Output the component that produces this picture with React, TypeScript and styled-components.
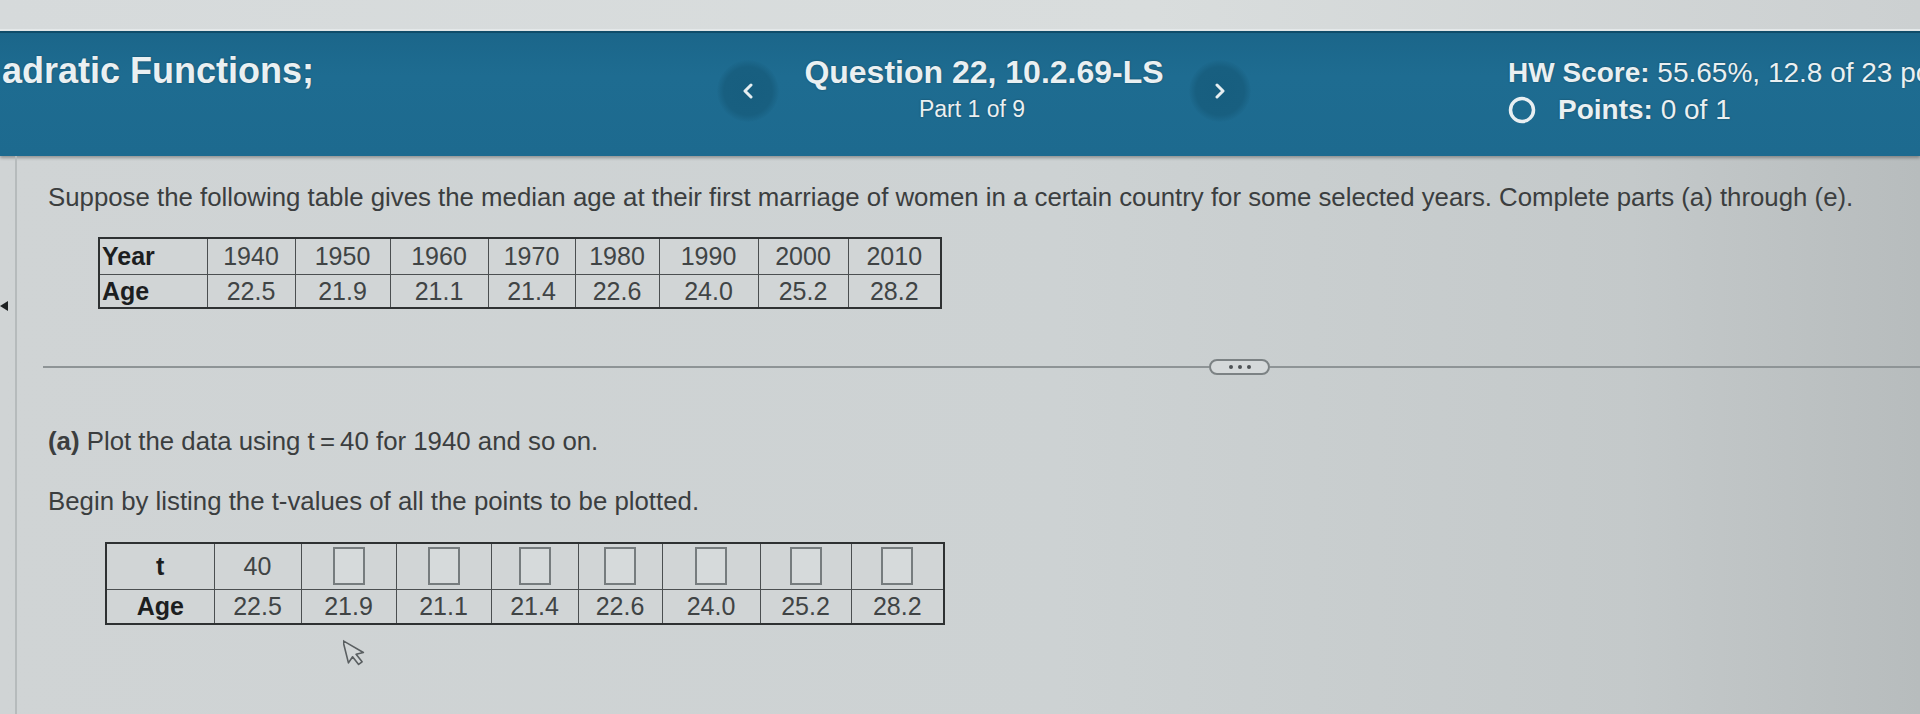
import styled, { createGlobalStyle } from "styled-components";

const GlobalStyle = createGlobalStyle`
  html, body {
    margin: 0;
    padding: 0;
  }
  body {
    background: #cdd2d3;
    font-family: "Liberation Sans", Arial, sans-serif;
  }
`;

const Page = styled.div`
  position: relative;
  width: 1920px;
  height: 714px;
  overflow: hidden;
  background: linear-gradient(90deg, #d0d4d5 0%, #cdd2d3 55%, #c4c9ca 85%, #b7bcbd 100%);
`;

const TopStrip = styled.div`
  height: 29px;
  background: linear-gradient(90deg, #d6dadb 0%, #d9dddd 60%, #ccd0d1 100%);
  border-bottom: 2px solid #e4e8e9;
`;

const Header = styled.header`
  height: 123px;
  border-top: 2px solid #0f4c69;
  background: linear-gradient(180deg, #1b668a 0%, #1e6c91 35%, #1d6a8f 100%);
  box-shadow: 0 2px 3px rgba(0, 0, 0, 0.3);
  display: flex;
  align-items: flex-start;
  color: #eaf0f2;
  text-shadow: 0 0 2px rgba(0, 0, 0, 0.35);
  white-space: nowrap;

  & > * {
    flex: none;
  }
`;

const SectionTitle = styled.div`
  width: 713px;
  padding: 18px 0 0 2px;
  font-size: 36px;
  line-height: 40px;
  font-weight: 700;
`;

const Nav = styled.div`
  display: flex;
  align-items: flex-start;
  margin-left: 2px;
`;

const NavButton = styled.div`
  width: 62px;
  height: 62px;
  margin-top: 27px;
  border-radius: 50%;
  background: radial-gradient(circle, #175e7f 0%, #185f80 55%, rgba(27, 102, 138, 0) 72%);
  display: flex;
  align-items: center;
  justify-content: center;
`;

const QuestionBlock = styled.div`
  width: 410px;
  padding-top: 21px;
  display: flex;
  flex-direction: column;
  align-items: center;
`;

const QuestionTitle = styled.div`
  font-size: 32px;
  line-height: 36px;
  font-weight: 700;
`;

const PartLabel = styled.div`
  margin-top: 5px;
  margin-right: 24px;
  font-size: 23px;
  line-height: 28px;
`;

const ScoreBlock = styled.div`
  margin-left: 257px;
  padding-top: 23px;
  font-size: 28px;
  line-height: 34px;
`;

const ScoreLine = styled.div``;

const PointsLine = styled.div`
  margin-top: 3px;
  display: flex;
  align-items: center;
  gap: 22px;
`;

const Strong = styled.b`
  font-weight: 700;
`;

const Body = styled.div`
  display: flex;
  height: 558px;
`;

const Gutter = styled.div`
  width: 15px;
  padding-top: 145px;
  border-right: 2px solid #b6bbbc;
`;

const Notch = styled.div`
  width: 0;
  height: 0;
  border-top: 5px solid transparent;
  border-bottom: 5px solid transparent;
  border-right: 8px solid #1e2122;
`;

const Main = styled.div`
  flex: 1;
  padding-left: 31px;
  color: #3b3e3f;
  font-size: 25.8px;
  line-height: 30px;
`;

const Paragraph = styled.p<{ $top: number }>`
  margin: ${(p) => p.$top}px 0 0;
  white-space: nowrap;
`;

const DataTable = styled.table<{ $top: number; $left: number }>`
  margin: ${(p) => p.$top}px 0 0 ${(p) => p.$left}px;
  border-collapse: collapse;
  table-layout: fixed;
  border: 2px solid #2e3132;
  font-size: 25px;
`;

const Col = styled.col<{ $w: number }>`
  width: ${(p) => p.$w}px;
`;

const Row = styled.tr<{ $h: number }>`
  height: ${(p) => p.$h}px;
`;

const Cell = styled.td`
  border: 1.5px solid #4b4f51;
  padding: 0;
  text-align: center;
  vertical-align: middle;
  color: #404445;
  background: #d1d5d6;
`;

const LabelCell = styled(Cell)<{ $align: "left" | "center" }>`
  text-align: ${(p) => p.$align};
  padding-left: ${(p) => (p.$align === "left" ? "2px" : "0")};
  font-weight: 700;
  color: #1c1e1f;
`;

const AnswerBox = styled.div`
  width: 28px;
  height: 34px;
  margin: 0 auto;
  border: 2px solid #767c7e;
  background: #d6dadb;
`;

const Divider = styled.div`
  margin: 50px 0 0 -5px;
  display: flex;
  align-items: center;
`;

const Rule = styled.div<{ $w?: number }>`
  height: 2px;
  background: #8e9496;
  ${(p) => (p.$w ? `width: ${p.$w}px;` : "flex: 1;")}
`;

const MorePill = styled.div`
  width: 57px;
  height: 12px;
  border: 2px solid #7c8284;
  border-radius: 9px;
  background: #d5d9da;
  display: flex;
  align-items: center;
  justify-content: center;
  gap: 5px;
`;

const Dot = styled.span`
  width: 4px;
  height: 4px;
  border-radius: 50%;
  background: #4d5254;
`;

const Pointer = styled.svg`
  position: absolute;
  left: 343px;
  top: 636px;
`;

const years = [1940, 1950, 1960, 1970, 1980, 1990, 2000, 2010];
const ages = ["22.5", "21.9", "21.1", "21.4", "22.6", "24.0", "25.2", "28.2"];
const firstCols = [108, 88, 95, 98, 87, 84, 99, 90, 93];
const secondCols = [108, 87, 95, 95, 87, 84, 98, 91, 93];

function Chevron({ dir }: { dir: "left" | "right" }) {
  return (
    <svg width="12" height="16" viewBox="0 0 12 16">
      <polyline
        points={dir === "left" ? "9,2 3,8 9,14" : "3,2 9,8 3,14"}
        fill="none"
        stroke="#e6eef1"
        strokeWidth="3"
        strokeLinecap="round"
        strokeLinejoin="round"
      />
    </svg>
  );
}

export default function App() {
  return (
    <Page>
      <GlobalStyle />
      <TopStrip />
      <Header>
        <SectionTitle>adratic Functions;</SectionTitle>
        <Nav>
          <NavButton>
            <Chevron dir="left" />
          </NavButton>
          <QuestionBlock>
            <QuestionTitle>Question 22, 10.2.69-LS</QuestionTitle>
            <PartLabel>Part 1 of 9</PartLabel>
          </QuestionBlock>
          <NavButton>
            <Chevron dir="right" />
          </NavButton>
        </Nav>
        <ScoreBlock>
          <ScoreLine>
            <Strong>HW Score:</Strong> 55.65%, 12.8 of 23 points
          </ScoreLine>
          <PointsLine>
            <svg width="28" height="28" viewBox="0 0 28 28">
              <circle cx="14" cy="14" r="11.5" fill="none" stroke="#e8eff2" strokeWidth="3.5" />
            </svg>
            <span>
              <Strong>Points:</Strong> 0 of 1
            </span>
          </PointsLine>
        </ScoreBlock>
      </Header>

      <Body>
        <Gutter>
          <Notch />
        </Gutter>
        <Main>
          <Paragraph $top={26}>
            Suppose the following table gives the median age at their first marriage of women in a
            certain country for some selected years. Complete parts (a) through (e).
          </Paragraph>

          <DataTable $top={25} $left={50}>
            <colgroup>
              {firstCols.map((w, i) => (
                <Col key={i} $w={w} />
              ))}
            </colgroup>
            <tbody>
              <Row $h={36}>
                <LabelCell $align="left">Year</LabelCell>
                {years.map((y) => (
                  <Cell key={y}>{y}</Cell>
                ))}
              </Row>
              <Row $h={34}>
                <LabelCell $align="left">Age</LabelCell>
                {ages.map((a, i) => (
                  <Cell key={i}>{a}</Cell>
                ))}
              </Row>
            </tbody>
          </DataTable>

          <Divider>
            <Rule $w={1166} />
            <MorePill>
              <Dot />
              <Dot />
              <Dot />
            </MorePill>
            <Rule />
          </Divider>

          <Paragraph $top={51}>
            <Strong>(a)</Strong> Plot the data using t&thinsp;=&thinsp;40 for 1940 and so on.
          </Paragraph>
          <Paragraph $top={30}>Begin by listing the t-values of all the points to be plotted.</Paragraph>

          <DataTable $top={26} $left={57}>
            <colgroup>
              {secondCols.map((w, i) => (
                <Col key={i} $w={w} />
              ))}
            </colgroup>
            <tbody>
              <Row $h={46}>
                <LabelCell $align="center">t</LabelCell>
                <Cell>40</Cell>
                {years.slice(1).map((y) => (
                  <Cell key={y}>
                    <AnswerBox />
                  </Cell>
                ))}
              </Row>
              <Row $h={35}>
                <LabelCell $align="center">Age</LabelCell>
                {ages.map((a, i) => (
                  <Cell key={i}>{a}</Cell>
                ))}
              </Row>
            </tbody>
          </DataTable>
        </Main>
      </Body>

      <Pointer width="26" height="34" viewBox="0 0 26 34">
        <path
          d="M3 2 L3 25 L8.5 20 L12.5 29 L16.5 27.2 L12.5 18.5 L20 18.5 Z"
          fill="#d3d7d8"
          stroke="#5a5f61"
          strokeWidth="1.6"
          strokeLinejoin="round"
          transform="rotate(-14 12 16)"
        />
      </Pointer>
    </Page>
  );
}
